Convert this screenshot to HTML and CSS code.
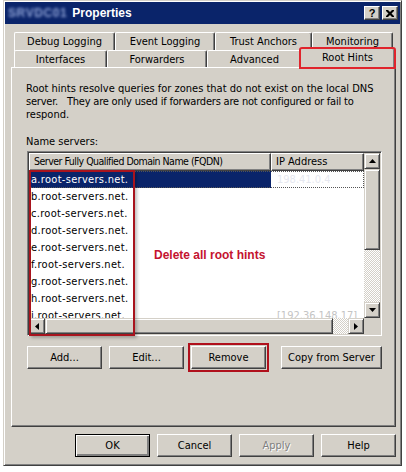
FILE: index.html
```html
<!DOCTYPE html>
<html lang="en">
<head>
    <meta charset="UTF-8">
    <title>Properties</title>
    <link rel="stylesheet" href="styles.css">
</head>
<body>
    <div class="window">
        <!-- Title bar -->
        <div class="titlebar">
            <span class="title-host">SRVDC01</span>
            <span class="title-text">Properties</span>
            <div class="title-buttons">
                <div class="title-btn help">?</div>
                <div class="title-btn">
                    <svg width="8" height="7" viewBox="0 0 8 7"><path d="M0 0h2l2 2 2-2h2v1l-2.5 2.5 2.5 2.5v1h-2l-2-2-2 2h-2v-1l2.5-2.5-2.5-2.5z" fill="#000"/></svg>
                </div>
            </div>
        </div>

        <div class="content">
            <!-- Tabs -->
            <div class="tabs">
                <div class="tab-row back">
                    <div class="tab w101">Debug Logging</div>
                    <div class="tab w100">Event Logging</div>
                    <div class="tab w97">Trust Anchors</div>
                    <div class="tab w81">Monitoring</div>
                </div>
                <div class="tab-row front">
                    <div class="tab w93">Interfaces</div>
                    <div class="tab w100">Forwarders</div>
                    <div class="tab w95">Advanced</div>
                    <div class="tab selected">Root Hints</div>
                </div>
            </div>

            <!-- Panel -->
            <div class="panel">
                <p class="desc">Root hints resolve queries for zones that do not exist on the local DNS<br><span class="tight">server. &nbsp;&nbsp;They are only used if forwarders are not configured or fail to</span><br>respond.</p>
                <div class="label">Name servers:</div>

                <div class="listbox">
                    <div class="list-main">
                        <div class="list-header">
                            <div class="col-head name">Server Fully Qualified Domain Name (FQDN)</div>
                            <div class="col-head ip">IP Address</div>
                        </div>
                        <div class="list-rows">
                            <div class="list-row selected"><span class="cell name">a.root-servers.net.</span><span class="cell ip ghost">198.41.0.4</span></div>
                            <div class="list-row"><span class="cell name">b.root-servers.net.</span></div>
                            <div class="list-row"><span class="cell name">c.root-servers.net.</span></div>
                            <div class="list-row"><span class="cell name">d.root-servers.net.</span></div>
                            <div class="list-row"><span class="cell name">e.root-servers.net.</span></div>
                            <div class="list-row"><span class="cell name">f.root-servers.net.</span></div>
                            <div class="list-row"><span class="cell name">g.root-servers.net.</span></div>
                            <div class="list-row"><span class="cell name">h.root-servers.net.</span></div>
                            <div class="list-row"><span class="cell name">i.root-servers.net.</span><span class="cell ip faint">[192.36.148.17]</span></div>
                        </div>
                    </div>
                    <div class="vscroll">
                        <div class="sb-btn"><svg width="7" height="4" viewBox="0 0 7 4"><polygon points="3.5,0 7,4 0,4" fill="#000"/></svg></div>
                        <div class="sb-thumb v"></div>
                        <div class="sb-track"></div>
                        <div class="sb-btn"><svg width="7" height="4" viewBox="0 0 7 4"><polygon points="0,0 7,0 3.5,4" fill="#000"/></svg></div>
                    </div>
                    <div class="hscroll">
                        <div class="sb-btn"><svg width="4" height="7" viewBox="0 0 4 7"><polygon points="4,0 4,7 0,3.5" fill="#000"/></svg></div>
                        <div class="sb-thumb h"></div>
                        <div class="sb-track"></div>
                        <div class="sb-btn"><svg width="4" height="7" viewBox="0 0 4 7"><polygon points="0,0 4,3.5 0,7" fill="#000"/></svg></div>
                    </div>
                    <div class="sb-corner"></div>

                    <!-- annotations -->
                    <div class="annot-box"></div>
                    <div class="annot-text">Delete all root hints</div>
                </div>

                <div class="list-buttons">
                    <button class="btn">Add...</button>
                    <button class="btn">Edit...</button>
                    <button class="btn marked">Remove</button>
                    <button class="btn wide">Copy from Server</button>
                </div>
            </div>

            <!-- Dialog buttons -->
            <div class="dialog-buttons">
                <button class="btn default">OK</button>
                <button class="btn">Cancel</button>
                <button class="btn" disabled>Apply</button>
                <button class="btn">Help</button>
            </div>
        </div>
    </div>
</body>
</html>
```

FILE: styles.css
```css
/* General */
body {
    margin: 0;
    background: #fff;
    font-family: "DejaVu Sans Condensed", "Liberation Sans", sans-serif;
    font-size: 11px;
    color: #000;
}

/* Window frame */
.window {
    width: 395px;
    height: 462px;
    margin-left: 3px;
    padding: 1px;
    background: #d4d0c8;
    border: 1px solid;
    border-color: #d4d0c8 #404040 #404040 #d4d0c8;
    box-shadow: inset 1px 1px #fff, inset -1px -1px #808080;
}

/* Title bar */
.titlebar {
    height: 22px;
    background: #0a246a;
    display: flex;
    align-items: center;
    padding-left: 3px;
}

.title-host {
    color: #93a6d8;
    font-family: "Liberation Sans", sans-serif;
    font-weight: bold;
    font-size: 12px;
    letter-spacing: 0.6px;
    filter: blur(1.4px);
    white-space: nowrap;
}

.title-text {
    color: #fff;
    font-family: "Liberation Sans", sans-serif;
    font-weight: bold;
    font-size: 12px;
    margin-left: 5px;
}

.title-buttons {
    margin-left: auto;
    display: flex;
    gap: 2px;
    margin-right: 2px;
}

.title-btn {
    width: 16px;
    height: 14px;
    box-sizing: border-box;
    background: #d4d0c8;
    border: 1px solid;
    border-color: #fff #404040 #404040 #fff;
    box-shadow: inset -1px -1px #808080;
    display: flex;
    align-items: center;
    justify-content: center;
}

.title-btn.help {
    font-family: "Liberation Sans", sans-serif;
    font-weight: bold;
    font-size: 11px;
    line-height: 12px;
}

/* Content area */
.content {
    padding: 8px 4px 0 6px;
}

/* Tabs */
.tabs {
    padding-left: 3px;
}

.tab-row {
    display: flex;
}

.tab-row.back {
    height: 18px;
}

.tab-row.front {
    height: 17px;
}

.tab {
    box-sizing: border-box;
    height: 100%;
    background: #d4d0c8;
    border-top: 1px solid #fff;
    border-left: 1px solid #fff;
    border-right: 1px solid #404040;
    border-radius: 2px 2px 0 0;
    box-shadow: inset -1px 0 #808080;
    display: flex;
    align-items: center;
    justify-content: center;
    white-space: nowrap;
}

.tab-row.back .tab {
    height: 19px;
    padding-bottom: 1px;
}

.w81 { width: 81px; }
.w93 { width: 93px; }
.w95 { width: 95px; }
.w97 { width: 97px; }
.w100 { width: 100px; }
.w101 { width: 101px; }

.tab.selected {
    position: relative;
    z-index: 1;
    width: 95px;
    height: 20px;
    margin: -2px -2px -1px -2px;
    padding-bottom: 3px;
    outline: 2px solid #e0242c;
    outline-offset: -1px;
}

/* Panel */
.panel {
    height: 344px;
    border: 1px solid;
    border-color: #fff #404040 #404040 #fff;
    box-shadow: inset -1px -1px #808080;
    padding: 14px 0 0 15px;
    width: 368px;
}

.desc {
    margin: 0 0 0 -1px;
    line-height: 13px;
    white-space: nowrap;
}

.desc .tight {
    letter-spacing: -0.2px;
}

.label {
    margin: 14px 0 0 -1px;
    line-height: 13px;
}

/* List view */
.listbox {
    position: relative;
    margin-top: 3px;
    width: 351px;
    display: grid;
    grid-template-columns: 335px 16px;
    grid-template-rows: 165px 16px;
    border: 1px solid;
    border-color: #808080 #fff #fff #808080;
    box-shadow: inset 1px 1px #404040, inset -1px -1px #d4d0c8;
    padding: 1px;
    background: #fff;
}

.list-main {
    overflow: hidden;
    background: #fff;
}

.list-header {
    display: flex;
    height: 18px;
}

.col-head {
    box-sizing: border-box;
    height: 18px;
    background: #d4d0c8;
    border-top: 1px solid #fff;
    border-left: 1px solid #fff;
    border-right: 1px solid #404040;
    border-bottom: 1px solid #404040;
    box-shadow: inset -1px -1px #808080;
    padding-left: 4px;
    line-height: 15px;
    font-size: 10.5px;
    letter-spacing: -0.5px;
    white-space: nowrap;
    overflow: hidden;
}

.col-head.name {
    width: 242px;
}

.col-head.ip {
    width: 93px;
    font-size: 11px;
    letter-spacing: 0;
}

.list-row {
    display: flex;
    height: 17px;
    line-height: 17px;
    white-space: nowrap;
}

.cell.name {
    width: 242px;
    padding-left: 2px;
    box-sizing: border-box;
    letter-spacing: 0.3px;
}

.cell.ip {
    padding-left: 6px;
}

.list-row.selected {
    outline: 1px dotted #555;
    outline-offset: -1px;
}

.list-row.selected .cell.name {
    background: #0a246a;
    color: #fff;
}

.ghost {
    color: #e6e8f0;
}

.faint {
    color: #c4c4c4;
}

/* Scrollbars */
.vscroll {
    display: flex;
    flex-direction: column;
}

.hscroll {
    display: flex;
}

.sb-btn,
.sb-thumb,
.sb-corner {
    box-sizing: border-box;
    background: #d4d0c8;
}

.sb-btn,
.sb-thumb {
    border: 1px solid;
    border-color: #d4d0c8 #404040 #404040 #d4d0c8;
    box-shadow: inset 1px 1px #fff, inset -1px -1px #808080;
}

.sb-btn {
    width: 16px;
    height: 16px;
    flex: none;
    display: flex;
    align-items: center;
    justify-content: center;
}

.sb-thumb.v {
    height: 81px;
    flex: none;
}

.sb-thumb.h {
    width: 288px;
    flex: none;
}

.sb-track {
    flex: 1;
    background: repeating-conic-gradient(#d4d0c8 0 25%, #fff 0 50%) 0 0 / 2px 2px;
}

/* Annotations */
.annot-box {
    position: absolute;
    left: 1px;
    top: 18px;
    width: 106px;
    height: 166px;
    box-sizing: border-box;
    border: 2px solid #a8141e;
    box-shadow: 2px 2px 3px rgba(0, 0, 0, 0.25);
}

.annot-text {
    position: absolute;
    left: 126px;
    top: 96px;
    color: #c4122f;
    font-family: "Liberation Sans", sans-serif;
    font-weight: bold;
    font-size: 12px;
    line-height: 14px;
}

/* Buttons */
.btn {
    box-sizing: border-box;
    width: 75px;
    height: 23px;
    padding: 0;
    font-family: inherit;
    font-size: 11px;
    color: #000;
    background: #d4d0c8;
    border: 1px solid;
    border-color: #fff #404040 #404040 #fff;
    box-shadow: inset -1px -1px #808080;
}

.btn.wide {
    width: 101px;
    margin-left: auto;
}

.btn.marked {
    outline: 2px solid #b0101c;
    outline-offset: 1px;
}

.btn.default {
    border: 1px solid #000;
    box-shadow: inset 1px 1px #fff, inset -2px -2px #808080, inset -1px -1px #404040;
}

.btn:disabled {
    color: #808080;
    text-shadow: 1px 1px #fff;
}

.list-buttons {
    display: flex;
    gap: 7px;
    margin-top: 10px;
    width: 355px;
}

.dialog-buttons {
    display: flex;
    justify-content: flex-end;
    gap: 7px;
    margin-top: 7px;
}
```
